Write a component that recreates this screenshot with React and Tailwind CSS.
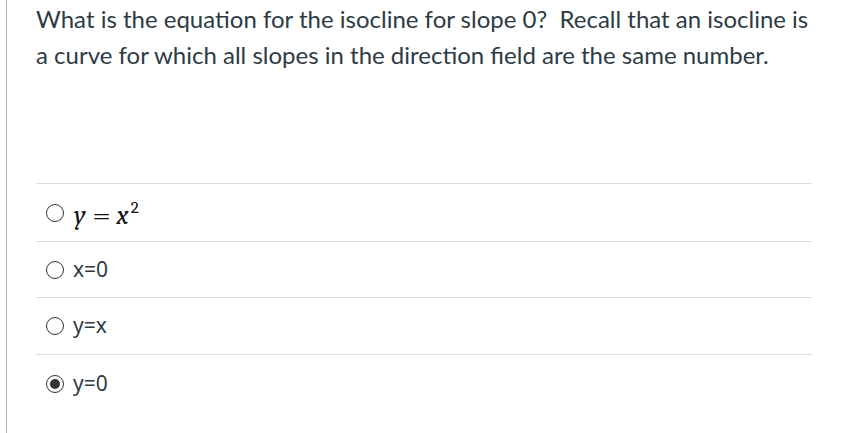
import { useState } from 'react'

const OPTIONS = [
  { id: 'a', math: true, h: 'h-[58px]' },
  { id: 'b', label: 'x=0', h: 'h-[56px]' },
  { id: 'c', label: 'y=x', h: 'h-[57px]' },
  { id: 'd', label: 'y=0', h: 'h-[57px]' },
]

function Radio({ checked }) {
  return (
    <span className="w-[18px] h-[18px] rounded-full border border-[#333] bg-white flex items-center justify-center shrink-0">
      {checked && <span className="w-[10px] h-[10px] rounded-full bg-[#333]" />}
    </span>
  )
}

function MathLabel() {
  return (
    <span className="font-serif text-[27px] leading-none text-[#111] whitespace-nowrap pt-[2px] pl-[1px]">
      <span className="italic">y</span>
      <span className="inline-block mx-[8px] scale-x-125">=</span>
      <span className="italic">x</span>
      <span className="text-[17px] align-[11px] ml-[2px]">2</span>
    </span>
  )
}

export default function App() {
  const [picked, setPicked] = useState('d')

  return (
    <div className="w-[842px] h-[433px] bg-white flex">
      <div className="w-[6px] shrink-0" />
      <div className="w-px bg-[#b4b4b4] shrink-0" />
      <div className="flex-1 pl-[29px] pr-[30px]">
        {/* Question */}
        <p className="text-[#2d3b45] text-[24px] leading-[36px] pt-[1px] font-[family-name:Lato,sans-serif]">
          What is the equation for the isocline for slope 0?&nbsp; Recall that an isocline is a curve for which all slopes in the direction field are the same number.
        </p>

        {/* Answers */}
        <div className="mt-[110px] border-t border-[#dcdcdc]">
          {OPTIONS.map((o, i) => (
            <div
              key={o.id}
              onClick={() => setPicked(o.id)}
              className={`flex items-center gap-[9px] pl-[10px] ${o.h} cursor-pointer ${i < OPTIONS.length - 1 ? 'border-b border-[#dcdcdc]' : ''}`}
            >
              <Radio checked={picked === o.id} />
              {o.math ? (
                <MathLabel />
              ) : (
                <span className="text-[#2d3b45] text-[21px] font-sans">{o.label}</span>
              )}
            </div>
          ))}
        </div>
      </div>
    </div>
  )
}
